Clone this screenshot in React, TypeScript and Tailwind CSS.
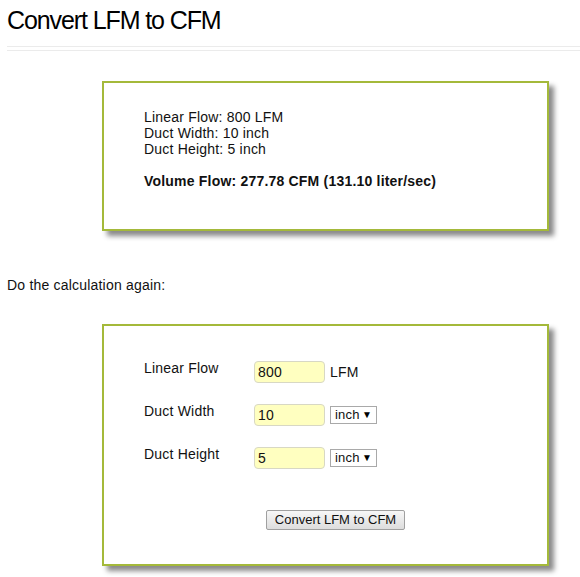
export default function App() {
  const rows = [
    { label: 'Linear Flow', value: '800', unit: null },
    { label: 'Duct Width', value: '10', unit: 'inch' },
    { label: 'Duct Height', value: '5', unit: 'inch' },
  ]

  return (
    <div className="min-h-[577px] bg-white pl-[7px] font-['Liberation_Sans',Arial,sans-serif] text-[14px] leading-[16px] tracking-[0.2px] text-[#111]">
      <h1 className="pt-[6px] text-[25px] leading-[28px] tracking-[-1.1px] text-black">Convert LFM to CFM</h1>
      <div className="mt-[12px] h-[5px] border-y border-[#ebebeb]"></div>

      <div className="ml-[95px] mt-[30px] h-[150px] w-[447px] border-2 border-[#a4b93a] bg-white pl-[40px] pt-[26px] shadow-[5px_5px_5px_#8a8a8a]">
        <p>Linear Flow: 800 LFM</p>
        <p>Duct Width: 10 inch</p>
        <p>Duct Height: 5 inch</p>
        <p className="mt-[16px] font-bold">Volume Flow: 277.78 CFM (131.10 liter/sec)</p>
      </div>

      <p className="mt-[46px]">Do the calculation again:</p>

      <div className="ml-[95px] mt-[31px] h-[242px] w-[447px] border-2 border-[#a4b93a] bg-white pl-[40px] pt-[35px] shadow-[5px_5px_5px_#8a8a8a]">
        <div className="flex flex-col gap-[21px]">
          {rows.map((row) => (
            <div key={row.label} className="flex items-start">
              <span className="-mt-px w-[110px]">{row.label}</span>
              <div className="flex h-[22px] items-center">
                <input
                  defaultValue={row.value}
                  className="h-[22px] w-[71px] rounded-[4px] border border-[#d8d8c4] bg-[#ffffc0] pl-[3px] text-[14px] text-[#111] outline-none"
                />
                {row.unit ? (
                  <div className="relative ml-[5px]">
                    <select
                      defaultValue="inch"
                      className="h-[18px] w-[47px] appearance-none border border-[#a9a9a9] bg-white pl-[4px] text-[13px] leading-[16px] text-[#111] outline-none"
                    >
                      <option value="inch">inch</option>
                      <option value="ft">ft</option>
                      <option value="mm">mm</option>
                    </select>
                    <span className="pointer-events-none absolute right-[5px] top-[3px] text-[10px] leading-[12px] text-black">▼</span>
                  </div>
                ) : (
                  <span className="ml-[5px]">LFM</span>
                )}
              </div>
            </div>
          ))}
        </div>
        <button className="ml-[122px] mt-[41px] h-[20px] w-[139px] rounded-[2px] border border-[#a0a0a0] bg-gradient-to-b from-[#f7f7f7] to-[#dddddd] text-[13px] leading-[16px] tracking-normal text-[#111]">
          Convert LFM to CFM
        </button>
      </div>
    </div>
  )
}
